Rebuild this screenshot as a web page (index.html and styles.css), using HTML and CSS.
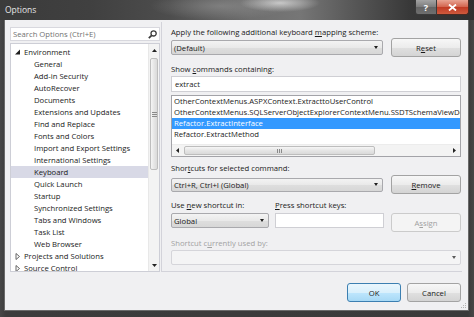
FILE: index.html
```html
<!DOCTYPE html>
<html>
<head>
<meta charset="utf-8">
<title>Options</title>
<link rel="stylesheet" href="styles.css">
</head>
<body>
<div class="window">
  <div class="titlebar">
    <span class="title">Options</span>
    <div class="caption-btns">
      <div class="cbtn help">?</div>
      <div class="cbtn close">
        <svg width="9" height="7" viewBox="0 0 9 7"><path d="M1 0.5 L8 6.5 M8 0.5 L1 6.5" stroke="#fff" stroke-width="1.8"/></svg>
      </div>
    </div>
  </div>
  <div class="client">
    <div class="main">
      <div class="left">
        <div class="search">
          <span class="placeholder">Search Options (Ctrl+E)</span>
          <svg class="magnifier" width="9" height="9" viewBox="0 0 9 9"><circle cx="5.6" cy="3.4" r="2.6" fill="none" stroke="#3a3a3a" stroke-width="1.3"/><path d="M3.7 5.3 L0.8 8.2" stroke="#3a3a3a" stroke-width="1.7"/></svg>
        </div>
        <div class="tree">
          <div class="tree-items">
            <div class="item l0"><svg class="exp" width="9" height="6" viewBox="0 0 9 6"><path d="M5 0.5 L5 5.5 L0 5.5 Z" fill="#1e1e1e"/></svg>Environment</div>
            <div class="item l1">General</div>
            <div class="item l1">Add-in Security</div>
            <div class="item l1">AutoRecover</div>
            <div class="item l1">Documents</div>
            <div class="item l1">Extensions and Updates</div>
            <div class="item l1">Find and Replace</div>
            <div class="item l1">Fonts and Colors</div>
            <div class="item l1">Import and Export Settings</div>
            <div class="item l1">International Settings</div>
            <div class="item l1 sel">Keyboard</div>
            <div class="item l1">Quick Launch</div>
            <div class="item l1">Startup</div>
            <div class="item l1">Synchronized Settings</div>
            <div class="item l1">Tabs and Windows</div>
            <div class="item l1">Task List</div>
            <div class="item l1">Web Browser</div>
            <div class="item l0"><svg class="exp" width="9" height="7" viewBox="0 0 9 7"><path d="M1 0.5 L4.5 3.5 L1 6.5 Z" fill="none" stroke="#555" stroke-width="0.9"/></svg>Projects and Solutions</div>
            <div class="item l0"><svg class="exp" width="9" height="7" viewBox="0 0 9 7"><path d="M1 0.5 L4.5 3.5 L1 6.5 Z" fill="none" stroke="#555" stroke-width="0.9"/></svg>Source Control</div>
          </div>
          <div class="vscroll">
            <div class="sarrow"><svg width="5" height="3" viewBox="0 0 5 3"><path d="M0 3 L2.5 0 L5 3 Z" fill="#222"/></svg></div>
            <div class="vthumb"><span class="grip-h"></span></div>
            <div class="sarrow bottom"><svg width="5" height="3" viewBox="0 0 5 3"><path d="M0 0 L2.5 3 L5 0 Z" fill="#222"/></svg></div>
          </div>
        </div>
      </div>
      <div class="page">
        <div class="label">Apply the following additional keyboard <u>m</u>apping scheme:</div>
        <div class="row r-scheme">
          <div class="combo wide"><span>(Default)</span><span class="arrow"></span></div>
          <div class="btn">R<u>e</u>set</div>
        </div>
        <div class="label l-show">Show <u>c</u>ommands containing:</div>
        <div class="textbox filter">extract</div>
        <div class="listbox">
          <div class="li">OtherContextMenus.ASPXContext.ExtracttoUserControl</div>
          <div class="li">OtherContextMenus.SQLServerObjectExplorerContextMenu.SSDTSchemaViewDesigner</div>
          <div class="li sel">Refactor.ExtractInterface</div>
          <div class="li">Refactor.ExtractMethod</div>
          <div class="hscroll">
            <div class="harrow"><svg width="3" height="5" viewBox="0 0 3 5"><path d="M3 0 L0 2.5 L3 5 Z" fill="#222"/></svg></div>
            <div class="hthumb"><span class="grip-v"></span></div>
            <div class="harrow right"><svg width="3" height="5" viewBox="0 0 3 5"><path d="M0 0 L3 2.5 L0 5 Z" fill="#222"/></svg></div>
          </div>
        </div>
        <div class="label l-short">Shor<u>t</u>cuts for selected command:</div>
        <div class="row r-remove">
          <div class="combo wide"><span>Ctrl+R, Ctrl+I (Global)</span><span class="arrow"></span></div>
          <div class="btn"><u>R</u>emove</div>
        </div>
        <div class="row r-labels">
          <div class="label lbl-use">Use <u>n</u>ew shortcut in:</div>
          <div class="label"><u>P</u>ress shortcut keys:</div>
        </div>
        <div class="row r-assign">
          <div class="combo global"><span>Global</span><span class="arrow"></span></div>
          <div class="textbox keys"></div>
          <div class="btn disabled">A<u>s</u>sign</div>
        </div>
        <div class="label disabled l-used">Shortcut c<u>u</u>rrently used by:</div>
        <div class="combo disabled full"><span></span><span class="arrow"></span></div>
      </div>
    </div>
    <div class="footer">
      <div class="btn ok">OK</div>
      <div class="btn">Cancel</div>
      <svg class="grip" width="6" height="6" viewBox="0 0 6 6"><g fill="#b4b4b4"><rect x="4" y="0" width="1" height="1"/><rect x="2" y="2" width="1" height="1"/><rect x="4" y="2" width="1" height="1"/><rect x="0" y="4" width="1" height="1"/><rect x="2" y="4" width="1" height="1"/><rect x="4" y="4" width="1" height="1"/></g></svg>
    </div>
  </div>
</div>
</body>
</html>
```
FILE: styles.css
```css
* { box-sizing: border-box; margin: 0; padding: 0; }
html, body { width: 474px; height: 317px; overflow: hidden; }
body {
  background: #363636;
  font-family: "Open Sans", "Noto Sans", sans-serif;
  font-size: 7.7px;
  color: #1a1a1a;
}
u { text-decoration: underline; text-underline-offset: 1px; }

.window {
  width: 474px;
  height: 317px;
  display: flex;
  flex-direction: column;
  background: linear-gradient(90deg, #474747 0, #3c3c3c 6px, #3a3a3a 468px, #474747 474px);
}

.titlebar {
  height: 20px;
  display: flex;
  position: relative;
  background:
    radial-gradient(ellipse 40px 9px at 280px 3px, rgba(235,235,235,0.7), rgba(235,235,235,0) 100%),
    radial-gradient(ellipse 70px 14px at 220px 6px, rgba(150,150,150,0.55), rgba(150,150,150,0) 100%),
    linear-gradient(90deg, #3b3b3b 0, #404040 90px, #4d4d4d 170px, #6e6e6e 250px, #767676 300px, #595959 350px, #383838 410px, #2f2f2f 474px);
}
.title {
  margin-left: 5px;
  line-height: 20px;
  font-size: 8.5px;
  color: #e6e6e6;
}
.caption-btns {
  margin-left: auto;
  margin-right: 5px;
  display: flex;
  height: 15px;
}
.cbtn {
  height: 15px;
  display: flex;
  align-items: center;
  justify-content: center;
  color: #fff;
  font-weight: bold;
  font-size: 9px;
}
.cbtn.help {
  width: 22px;
  background: linear-gradient(#a3a3a3, #7c7c7c 50%, #646464 51%, #6f6f6f);
  border: 1px solid #3a3a3a;
  border-top: none;
  border-radius: 0 0 0 3px;
}
.cbtn.close {
  width: 32px;
  background: linear-gradient(#e8a493, #d2634d 50%, #c03a24 51%, #cf5a3d);
  border: 1px solid #4a2a22;
  border-top: none;
  border-left: none;
  border-radius: 0 0 3px 0;
}

.client {
  margin: 0 6px 0 5px;
  height: 290px;
  background: #f0f0f2;
  display: flex;
  flex-direction: column;
  box-shadow: 0 0 0 1px #6a6a6a;
}
.main {
  height: 252px;
  display: flex;
}

/* left column */
.left {
  width: 150px;
  margin-left: 5px;
  padding-top: 7px;
  display: flex;
  flex-direction: column;
}
.search {
  height: 14px;
  margin-bottom: 2px;
  background: #fff;
  border: 1px solid #d8d8de;
  display: flex;
  align-items: center;
  padding-left: 2px;
}
.placeholder { color: #717171; }
.magnifier { margin-left: auto; margin-right: 2px; }

.tree {
  height: 229px;
  border: 1px solid #cdced6;
  background: #fff;
  display: flex;
  overflow: hidden;
}
.tree-items {
  flex: 1;
  padding-top: 2px;
  overflow: hidden;
}
.item {
  height: 12px;
  line-height: 12px;
  white-space: nowrap;
  display: flex;
  align-items: center;
}
.item.l0 { padding-left: 4px; }
.item.l1 { padding-left: 23px; }
.item.sel { background: #d8d9e6; }
.exp { flex: none; }

.vscroll {
  width: 11px;
  background: #f3f3f3;
  border-left: 1px solid #e8e8e8;
  display: flex;
  flex-direction: column;
}
.sarrow {
  height: 12px;
  display: flex;
  align-items: center;
  justify-content: center;
}
.sarrow.bottom { margin-top: auto; }
.vthumb {
  height: 112px;
  margin: 2px 1px 0 1px;
  border: 1px solid #bdbdbd;
  border-radius: 2px;
  background: linear-gradient(90deg, #f5f5f5, #e6e6e6 50%, #dadada);
  display: flex;
  align-items: center;
  justify-content: center;
}
.grip-h {
  width: 5px;
  height: 5px;
  background: repeating-linear-gradient(#8a8a8a 0 1px, transparent 1px 2px);
}

/* right page */
.page {
  width: 301px;
  margin-left: 1px;
  margin-top: 2px;
  border-left: 1px solid #d3d3da;
  border-bottom: 1px solid #d3d3da;
  padding: 4px 1px 0 9px;
  display: flex;
  flex-direction: column;
}
.label {
  height: 12px;
  line-height: 12px;
  white-space: nowrap;
}
.label.disabled { color: #a2a2a2; }
.row { display: flex; align-items: center; }
.r-scheme { height: 19px; gap: 8px; }
.l-show { margin-top: 6px; }
.textbox {
  background: #fff;
  border: 1px solid #cfcfd4;
  display: flex;
  align-items: center;
  padding-left: 3px;
}
.textbox.filter { height: 16px; margin-top: 1px; }
.listbox {
  height: 62px;
  margin-top: 3px;
  border: 1px solid #a3a3a8;
  background: #fff;
  display: flex;
  flex-direction: column;
  overflow: hidden;
}
.li {
  height: 11px;
  line-height: 11px;
  padding-left: 2px;
  white-space: nowrap;
  overflow: hidden;
  flex: none;
}
.li.sel { background: #3399ff; color: #fff; }
.hscroll {
  margin-top: auto;
  height: 12px;
  background: #f3f3f3;
  border-top: 1px solid #ececec;
  display: flex;
  align-items: center;
}
.harrow {
  width: 11px;
  height: 11px;
  display: flex;
  align-items: center;
  justify-content: center;
  flex: none;
}
.harrow.right { margin-left: auto; }
.hthumb {
  width: 191px;
  height: 9px;
  margin-left: 1px;
  border: 1px solid #bdbdbd;
  border-radius: 2px;
  background: linear-gradient(#f6f6f6, #e5e5e5 50%, #d9d9d9);
  display: flex;
  align-items: center;
  justify-content: center;
}
.grip-v {
  width: 5px;
  height: 4px;
  background: repeating-linear-gradient(90deg, #8a8a8a 0 1px, transparent 1px 2px);
}
.l-short { margin-top: 5px; }
.r-remove { height: 19px; gap: 8px; margin-top: 1px; }
.r-labels { margin-top: 5px; }
.lbl-use { width: 104px; }
.r-assign { height: 19px; margin-top: 2px; align-items: flex-start; }
.l-used { margin-top: 5px; }

.combo {
  height: 15px;
  border: 1px solid #a9a9ad;
  border-radius: 2px;
  background: linear-gradient(#f3f3f3, #e9e9e9 50%, #dedede 51%, #d7d7d7);
  display: flex;
  align-items: center;
  padding-left: 2px;
  white-space: nowrap;
}
.combo.wide { width: 212px; height: 15px; }
.r-remove .combo.wide { height: 14px; }
.combo.global { width: 98px; }
.combo.full { width: 290px; margin-top: 1px; }
.combo .arrow {
  margin-left: auto;
  margin-right: 4px;
  width: 0;
  height: 0;
  border-left: 2.5px solid transparent;
  border-right: 2.5px solid transparent;
  border-top: 3px solid #1e1e1e;
}
.combo.disabled {
  background: #f4f4f5;
  border-color: #d5d5da;
}
.combo.disabled .arrow { border-top-color: #5a5a5a; }
.textbox.keys { width: 109px; height: 15px; margin-left: 6px; }
.r-assign .btn { margin-left: 7px; }

.btn {
  height: 19px;
  width: 70px;
  border: 1px solid #a3a3a3;
  border-radius: 3px;
  background: linear-gradient(#f7f7f7, #ececec 50%, #e0e0e0 51%, #d4d4d4);
  display: flex;
  align-items: center;
  justify-content: center;
  flex: none;
  white-space: nowrap;
}
.btn.disabled {
  color: #a0a0a0;
  background: #f4f4f4;
  border-color: #cbcbcb;
}

.footer {
  height: 38px;
  display: flex;
  justify-content: flex-end;
  padding: 11px 7px 0 0;
  gap: 6px;
  position: relative;
}
.footer .btn { width: 54px; }
.btn.ok {
  border-color: #3c7fb1;
  background: linear-gradient(#eaf6fd, #d9f0fc 50%, #bee6fd 51%, #a7d9f5);
}
.grip { position: absolute; right: 1px; bottom: 1px; }
```
